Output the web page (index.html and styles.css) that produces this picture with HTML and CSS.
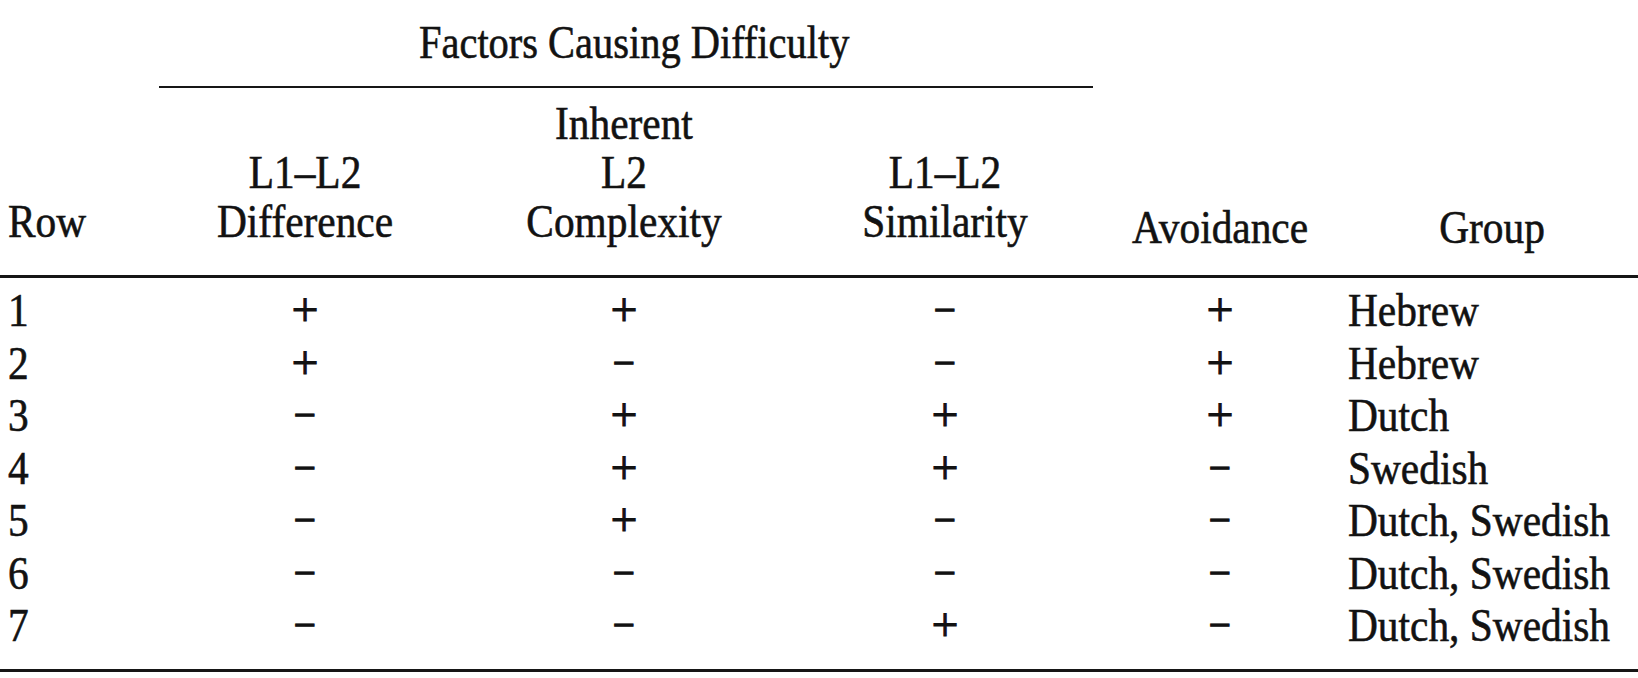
FILE: index.html
```html
<!DOCTYPE html>
<html lang="en">
<head>
<meta charset="utf-8">
<title>Factors Causing Difficulty</title>
<link rel="stylesheet" href="styles.css">
</head>
<body>
<div class="table">
  <div class="title"><span class="t">Factors Causing Difficulty</span></div>
  <div class="rule rule-span"></div>

  <div class="head head-left"><span class="t tl">Row</span></div>
  <div class="head"><span class="t">L1–L2<br>Difference</span></div>
  <div class="head"><span class="t">Inherent<br>L2<br>Complexity</span></div>
  <div class="head"><span class="t">L1–L2<br>Similarity</span></div>
  <div class="head head-low"><span class="t">Avoidance</span></div>
  <div class="head head-low"><span class="t">Group</span></div>

  <div class="rule rule-full rule-mid"></div>

  <div class="cell num"><span class="t tl">1</span></div>
  <div class="cell sign">+</div>
  <div class="cell sign">+</div>
  <div class="cell sign"><span class="minus">−</span></div>
  <div class="cell sign">+</div>
  <div class="cell group"><span class="t tl">Hebrew</span></div>

  <div class="cell num"><span class="t tl">2</span></div>
  <div class="cell sign">+</div>
  <div class="cell sign"><span class="minus">−</span></div>
  <div class="cell sign"><span class="minus">−</span></div>
  <div class="cell sign">+</div>
  <div class="cell group"><span class="t tl">Hebrew</span></div>

  <div class="cell num"><span class="t tl">3</span></div>
  <div class="cell sign"><span class="minus">−</span></div>
  <div class="cell sign">+</div>
  <div class="cell sign">+</div>
  <div class="cell sign">+</div>
  <div class="cell group"><span class="t tl">Dutch</span></div>

  <div class="cell num"><span class="t tl">4</span></div>
  <div class="cell sign"><span class="minus">−</span></div>
  <div class="cell sign">+</div>
  <div class="cell sign">+</div>
  <div class="cell sign"><span class="minus">−</span></div>
  <div class="cell group"><span class="t tl">Swedish</span></div>

  <div class="cell num"><span class="t tl">5</span></div>
  <div class="cell sign"><span class="minus">−</span></div>
  <div class="cell sign">+</div>
  <div class="cell sign"><span class="minus">−</span></div>
  <div class="cell sign"><span class="minus">−</span></div>
  <div class="cell group"><span class="t tl">Dutch, Swedish</span></div>

  <div class="cell num"><span class="t tl">6</span></div>
  <div class="cell sign"><span class="minus">−</span></div>
  <div class="cell sign"><span class="minus">−</span></div>
  <div class="cell sign"><span class="minus">−</span></div>
  <div class="cell sign"><span class="minus">−</span></div>
  <div class="cell group"><span class="t tl">Dutch, Swedish</span></div>

  <div class="cell num"><span class="t tl">7</span></div>
  <div class="cell sign"><span class="minus">−</span></div>
  <div class="cell sign"><span class="minus">−</span></div>
  <div class="cell sign">+</div>
  <div class="cell sign"><span class="minus">−</span></div>
  <div class="cell group"><span class="t tl">Dutch, Swedish</span></div>

  <div class="rule rule-full rule-bottom"></div>
</div>
</body>
</html>
```
FILE: styles.css
```css
html, body {
  margin: 0;
  padding: 0;
  background: #ffffff;
}

body {
  font-family: "Liberation Serif", "Times New Roman", serif;
  font-size: 47px;
  color: #121212;
  -webkit-text-stroke: 0.6px #121212;
}

.table {
  display: grid;
  grid-template-columns: 159px 292px 346px 296px 254px 291px;
  width: 1638px;
}

.t {
  display: inline-block;
  white-space: nowrap;
  transform: scaleX(0.88);
  transform-origin: center;
}

.tl {
  transform-origin: left center;
}

.title {
  grid-column: 2 / 5;
  grid-row: 1;
  margin-top: 17px;
  padding-left: 16px;
  line-height: 50px;
  text-align: center;
}

.title .t {
  transform: scaleX(0.86);
}

.rule {
  background: #161616;
}

.rule-span {
  grid-column: 2 / 5;
  grid-row: 2;
  height: 2px;
  margin-top: 19px;
  margin-bottom: 11px;
}

.rule-full {
  grid-column: 1 / -1;
  height: 3px;
}

.rule-mid {
  margin-top: 29px;
  margin-bottom: 6px;
}

.rule-bottom {
  margin-top: 17px;
}

.head {
  grid-row: 3;
  align-self: end;
  line-height: 49px;
  text-align: center;
  white-space: nowrap;
}

.head-left {
  grid-column: 1;
  text-align: left;
  padding-left: 8px;
}

.head-low {
  position: relative;
  top: 6px;
}

.cell {
  line-height: 52.5px;
  height: 52.5px;
  text-align: center;
  white-space: nowrap;
}

.num {
  grid-column: 1;
  text-align: left;
  padding-left: 8px;
}

.group {
  text-align: left;
  padding-left: 1px;
}

.sign {
  font-size: 48px;
  -webkit-text-stroke: 0.9px #121212;
}

.minus {
  display: inline-block;
  transform: scaleX(0.84);
}
```
